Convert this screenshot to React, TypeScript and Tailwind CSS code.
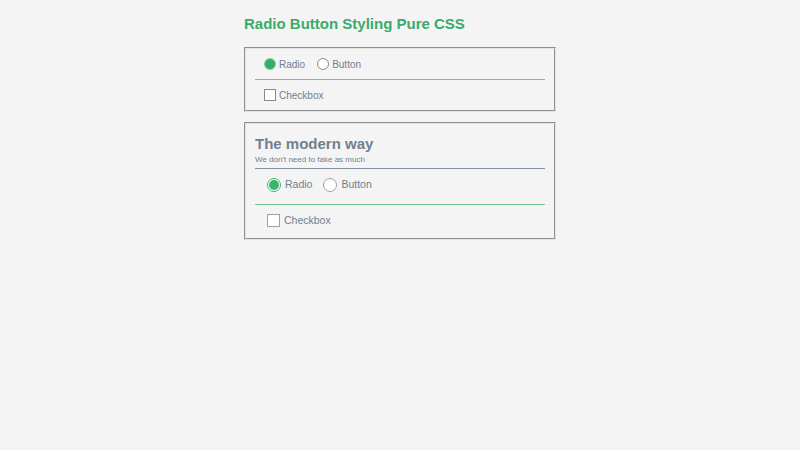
import React from "react";

const font = { fontFamily: '"Liberation Sans", Arial, sans-serif' };

function PlainRadio({ checked, label }: { checked?: boolean; label: string }) {
  return (
    <label className="flex items-center gap-[3px]">
      {checked ? (
        <span className="w-[12px] h-[12px] rounded-full bg-[#34ad69] border border-[#86d0a6] box-border" />
      ) : (
        <span className="w-[12px] h-[12px] rounded-full bg-white border border-[#8a8a8a] box-border" />
      )}
      <span>{label}</span>
    </label>
  );
}

function ModernRadio({ checked, label }: { checked?: boolean; label: string }) {
  return (
    <label className="flex items-center gap-[4px]">
      <span
        className={
          "w-[14px] h-[14px] rounded-full border box-border flex items-center justify-center bg-white " +
          (checked ? "border-[#3cb371]" : "border-[#9aa3ad]")
        }
      >
        {checked && <span className="w-[10px] h-[10px] rounded-full bg-[#3cb371]" />}
      </span>
      <span>{label}</span>
    </label>
  );
}

export default function App() {
  return (
    <div className="min-h-[450px] bg-[#f4f4f4] text-[#708090]" style={font}>
      <div className="w-[312px] mx-auto pt-[15px]">
        <h1 className="text-[15px] leading-[18px] font-bold text-[#38ac6b]">
          Radio Button Styling Pure CSS
        </h1>

        {/* classic controls */}
        <div className="mt-[14px] border-2 [border-style:groove] border-[#e4e4e4] px-[9px] text-[10px]">
          <div className="h-[30px] flex items-center gap-[12px] pl-[9px]">
            <PlainRadio checked label="Radio" />
            <PlainRadio label="Button" />
          </div>
          <div className="h-px bg-[#74c496]" />
          <div className="h-[30px] flex items-center pl-[9px]">
            <label className="flex items-center gap-[3px]">
              <span className="w-[12px] h-[12px] bg-white border border-[#8a8a8a] box-border" />
              <span>Checkbox</span>
            </label>
          </div>
        </div>

        {/* modern controls */}
        <div className="mt-[10px] border-2 [border-style:groove] border-[#e4e4e4] px-[9px] text-[10.5px]">
          <div className="pt-[11px] pb-[3px] border-b border-[#8592a0]">
            <div className="text-[15px] leading-[18px] font-bold">The modern way</div>
            <div className="text-[8px] leading-[10px] mt-[2px]">We don't need to fake as much</div>
          </div>
          <div className="h-[35px] pb-[3px] flex items-center gap-[11px] pl-[12px]">
            <ModernRadio checked label="Radio" />
            <ModernRadio label="Button" />
          </div>
          <div className="h-px bg-[#74c496]" />
          <div className="h-[33px] pb-[2px] flex items-center pl-[12px]">
            <label className="flex items-center gap-[4px]">
              <span className="w-[13px] h-[13px] bg-white border border-[#9aa3ad] box-border" />
              <span>Checkbox</span>
            </label>
          </div>
        </div>
      </div>
    </div>
  );
}
